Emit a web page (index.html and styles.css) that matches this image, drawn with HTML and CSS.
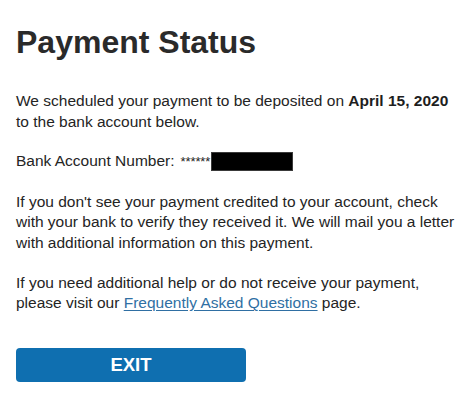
FILE: index.html
```html
<!DOCTYPE html>
<html lang="en">
<head>
<meta charset="utf-8">
<title>Payment Status</title>
<link rel="stylesheet" href="styles.css">
</head>
<body>
<main class="page">
  <h1 class="title">Payment Status</h1>
  <p class="text">We scheduled your payment to be deposited on <strong>April 15, 2020</strong> to the bank account below.</p>
  <p class="text account">Bank Account Number: <span class="stars">******</span><span class="redacted"></span></p>
  <p class="text">If you don't see your payment credited to your account, check with your bank to verify they received it. We will mail you a letter with additional information on this payment.</p>
  <p class="text">If you need additional help or do not receive your payment, please visit our <a class="link" href="#">Frequently Asked Questions</a> page.</p>
  <button class="exit" type="button">EXIT</button>
</main>
</body>
</html>
```

FILE: styles.css
```css
html, body {
  margin: 0;
  padding: 0;
  background: #ffffff;
}

body {
  font-family: "Liberation Sans", Arial, Helvetica, sans-serif;
  color: #242424;
}

.page {
  width: 442px;
  padding: 24px 16px 0 16px;
  display: flex;
  flex-direction: column;
  align-items: flex-start;
}

.title {
  margin: 0 0 31px 0;
  font-size: 32px;
  line-height: 36px;
  font-weight: 700;
  color: #2a2a2a;
}

.text {
  margin: 0 0 19px 0;
  font-size: 15.5px;
  line-height: 20.6px;
}

.text strong {
  font-weight: 700;
  color: #1e1e1e;
}

.account {
  display: flex;
  align-items: baseline;
}

.stars {
  font-size: 13px;
  margin-left: 6px;
  letter-spacing: -0.1px;
}

.redacted {
  display: inline-block;
  align-self: center;
  width: 80px;
  height: 17px;
  background: #000000;
  border: 1px solid #3a3a3a;
  margin-left: 1px;
}

.link {
  color: #2f6fa3;
  text-decoration: underline;
  text-underline-offset: 2px;
}

.exit {
  margin-top: 15px;
  width: 230px;
  height: 34px;
  border: none;
  border-radius: 4px;
  background: #0f6fb0;
  color: #ffffff;
  font-family: "Liberation Sans", Arial, Helvetica, sans-serif;
  font-weight: 700;
  font-size: 18.5px;
  padding: 0;
  cursor: pointer;
}
```
